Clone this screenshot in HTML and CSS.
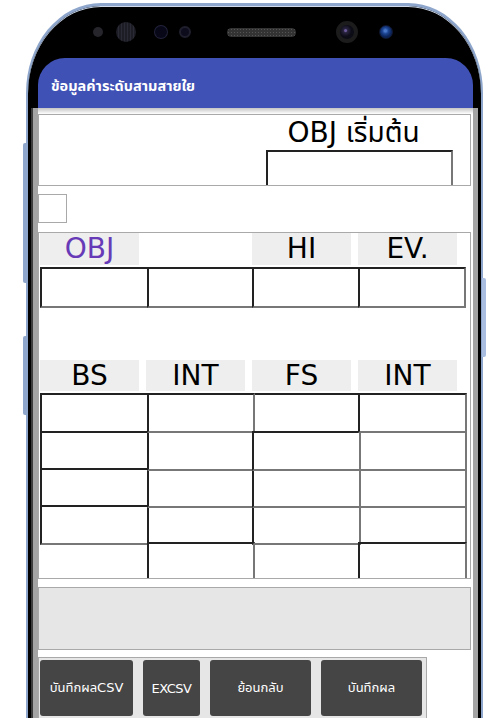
FILE: index.html
```html
<!DOCTYPE html>
<html lang="th">
<head>
<meta charset="utf-8">
<title>ข้อมูลค่าระดับสามสายใย</title>
<link rel="stylesheet" href="styles.css">
</head>
<body>
<div class="phone">
  <span class="side-btn left-a"></span>
  <span class="side-btn left-b"></span>
  <span class="side-btn right-a"></span>
  <div class="sensors">
    <span class="s-dot1"></span>
    <span class="s-dot2"></span>
    <span class="s-dot3"></span>
    <span class="s-dot4"></span>
    <span class="s-speaker"></span>
    <span class="s-camera"></span>
    <span class="s-blue"></span>
  </div>
  <div class="screen">
    <header class="appbar"><h1 class="title">ข้อมูลค่าระดับสามสายใย</h1></header>
    <main class="content">
      <div class="appbar-shadow"></div>
      <section class="card start-card">
        <div class="start-col">
          <div class="start-label">OBJ เริ่มต้น</div>
          <div class="start-input"></div>
        </div>
      </section>
      <div class="square"></div>
      <section class="card sheet">
        <div class="head-row">
          <div class="hcell purple">OBJ</div>
          <div class="hcell blank"></div>
          <div class="hcell">HI</div>
          <div class="hcell">EV.</div>
        </div>
        <div class="row1">
          <div class="cell tk lk bg h41"></div>
          <div class="cell tk lk bg h41"></div>
          <div class="cell tk lk bg h41"></div>
          <div class="cell tk lk bg rg h41"></div>
        </div>
        <div class="head-row head-row2">
          <div class="hcell">BS</div>
          <div class="hcell">INT</div>
          <div class="hcell">FS</div>
          <div class="hcell">INT</div>
        </div>
        <div class="table2">
          <div class="col c1">
            <div class="cell tk lk h38"></div>
            <div class="cell tk lk h37"></div>
            <div class="cell tk lk h37"></div>
            <div class="cell tk lk bg h40"></div>
          </div>
          <div class="col c2">
            <div class="cell tk lk rg bg h40"></div>
            <div class="cell lk bg h38"></div>
            <div class="cell lk bg h37"></div>
            <div class="cell lk h34"></div>
            <div class="cell tk lk rg h40"></div>
          </div>
          <div class="col c3">
            <div class="cell tk h38"></div>
            <div class="cell tk lk rg bg wide h40"></div>
            <div class="cell lk rg bg wide h37"></div>
            <div class="cell lk rg bg wide h37"></div>
            <div class="cell h40"></div>
          </div>
          <div class="col c4">
            <div class="cell tk lk rg bg h40"></div>
            <div class="cell rg bg h38"></div>
            <div class="cell rg bg h37"></div>
            <div class="cell rg h34"></div>
            <div class="cell tk lk rg h40"></div>
          </div>
        </div>
      </section>
      <div class="note-box"></div>
      <nav class="button-bar">
        <button class="btn b-csv">บันทึกผลCSV</button>
        <button class="btn b-ex">EXCSV</button>
        <button class="btn b-back">ย้อนกลับ</button>
        <button class="btn b-save">บันทึกผล</button>
      </nav>
    </main>
  </div>
</div>
</body>
</html>
```

FILE: styles.css
```css
html, body {
  margin: 0;
  padding: 0;
  background: #ffffff;
}
body {
  width: 497px;
  height: 718px;
  overflow: hidden;
  font-family: Tahoma, "DejaVu Sans", "Noto Sans Thai", "Noto Sans", sans-serif;
}

.phone {
  position: relative;
  box-sizing: border-box;
  margin: 3px 0 0 26px;
  width: 457px;
  height: 780px;
  background: #000;
  border-style: solid;
  border-color: #8ea6cb;
  border-width: 3px 2px 0 2px;
  border-radius: 75px 75px 0 0 / 90px 90px 0 0;
  padding: 0 3px;
  box-shadow: inset 0 1px 0 #cfdaea;
}

.side-btn {
  position: absolute;
  width: 4px;
  background: #8ea6cb;
}
.left-a { left: -5px; top: 137px; height: 140px; border-radius: 2px 0 0 2px; }
.left-b { left: -5px; top: 330px; height: 79px; border-radius: 2px 0 0 2px; }
.right-a { right: -5px; top: 272px; height: 79px; border-radius: 0 2px 2px 0; background: #a9bde0; }

.sensors {
  height: 52px;
  display: flex;
  align-items: center;
  padding-left: 62px;
}
.sensors span { display: block; border-radius: 50%; flex: none; }
.s-dot1 { width: 10px; height: 10px; background: #25252b; }
.s-dot2 {
  width: 20px; height: 20px; margin-left: 13px;
  background: repeating-linear-gradient(90deg, #1d1d26 0 2px, #2a2a36 2px 3px);
}
.s-dot3 { width: 12px; height: 12px; margin-left: 19px; background: #070718; box-shadow: 0 0 0 1px #22223a; }
.s-dot4 { width: 8px; height: 8px; margin-left: 12px; background: #0c0c1c; border: 2px solid #1f1f2e; }
.sensors .s-speaker {
  width: 69px; height: 9px; margin-left: 36px; border-radius: 5px;
  background-color: #333333;
  background-image: radial-gradient(circle, #555555 0.8px, transparent 1px);
  background-size: 3px 3px;
}
.s-camera {
  width: 14px; height: 14px; margin-left: 40px;
  border: 4px solid #1c1c1c;
  background: radial-gradient(circle at 40% 40%, #6a5a9a 0 1px, #2a2440 2px, #0c0c16 6px);
}
.s-blue {
  width: 12px; height: 12px; margin-left: 21px;
  border: 1px solid #101830;
  background: radial-gradient(circle at 45% 40%, #4a78c8 0 1px, #1c4594 3px, #0c2458 6px);
}

.screen {
  display: flex;
  flex-direction: column;
}

.appbar {
  margin: 0 5px 0 7px;
  height: 50px;
  background: #3f51b5;
  border-radius: 27px 27px 0 0;
  box-sizing: border-box;
  padding: 19px 0 0 13px;
}
.title {
  margin: 0;
  font-size: 14.5px;
  line-height: 18px;
  font-weight: bold;
  color: #ffffff;
}

.content {
  padding: 0 5px 0 7px;
  height: 620px;
  background:
    linear-gradient(to right, #3c3c3c 0, #3c3c3c 2px, #a4a4a4 2px, #a4a4a4 7px, transparent 7px) left top / 7px 100% no-repeat,
    linear-gradient(to right, #a4a4a4 0, #a4a4a4 5px) right top / 5px 100% no-repeat,
    #ffffff;
}
.appbar-shadow {
  height: 6px;
  background: linear-gradient(#c4c4c4, #f4f4f4 80%, #ffffff);
}

.card {
  box-sizing: border-box;
  width: 433px;
  border: 1px solid #a9a9a9;
  overflow: hidden;
}
.start-card {
  height: 72px;
  display: flex;
  justify-content: flex-end;
  padding-right: 17px;
}
.start-col {
  width: 187px;
  display: flex;
  flex-direction: column;
}
.start-label {
  height: 35px;
  line-height: 35px;
  font-size: 28px;
  text-align: center;
  color: #000;
  padding-right: 12px;
  white-space: nowrap;
}
.start-input {
  box-sizing: border-box;
  height: 40px;
  border-top: 2px solid #222;
  border-left: 2px solid #222;
  border-right: 2px solid #777;
}

.square {
  box-sizing: border-box;
  margin-top: 8px;
  width: 29px;
  height: 29px;
  border: 1px solid #a9a9a9;
}

.sheet {
  margin-top: 9px;
  height: 347px;
  padding-left: 1px;
}
.head-row {
  display: grid;
  grid-template-columns: 106px 106px 106px 108px;
  height: 32px;
}
.head-row2 {
  margin-top: 52px;
  height: 31px;
}
.hcell {
  width: 99px;
  background: #eeeeee;
  font-size: 28px;
  line-height: 32px;
  text-align: center;
  color: #000;
}
.head-row2 .hcell { line-height: 31px; }
.hcell.blank { background: transparent; }
.hcell.purple { color: #673ab7; }

.row1 {
  margin-top: 2px;
  display: grid;
  grid-template-columns: 107px 105px 106px 108px;
}

.cell {
  box-sizing: border-box;
  border: 0 solid transparent;
}
.tk { border-top: 2px solid #222; }
.lk { border-left: 2px solid #222; }
.rg { border-right: 2px solid #777; }
.bg { border-bottom: 2px solid #777; }

.h34 { height: 34px; }
.h37 { height: 37px; }
.h38 { height: 38px; }
.h40 { height: 40px; }
.h41 { height: 41px; }

.table2 {
  margin-top: 2px;
  display: grid;
  grid-template-columns: 107px 108px 103px 109px;
}
.col {
  display: flex;
  flex-direction: column;
}
.cell.wide {
  margin-left: -3px;
  margin-right: -3px;
}

.note-box {
  box-sizing: border-box;
  margin-top: 8px;
  width: 433px;
  height: 63px;
  background: #e6e6e6;
  border: 1px solid #a9a9a9;
}

.button-bar {
  box-sizing: border-box;
  margin-top: 7px;
  width: 389px;
  height: 70px;
  background: #e6e6e6;
  border: 1px solid #a9a9a9;
  padding: 2px 4px 0 1px;
  display: flex;
  gap: 10px;
}
.btn {
  height: 56px;
  border: 0;
  border-radius: 3px;
  background: #454545;
  color: #ffffff;
  font-family: Tahoma, "DejaVu Sans", "Noto Sans Thai", "Noto Sans", sans-serif;
  font-size: 13px;
  padding: 0;
  flex: none;
}
.b-ex { width: 57px; letter-spacing: -0.5px; }
.b-csv { width: 93px; }
.b-back { width: 101px; }
.b-save { width: 101px; }
```
